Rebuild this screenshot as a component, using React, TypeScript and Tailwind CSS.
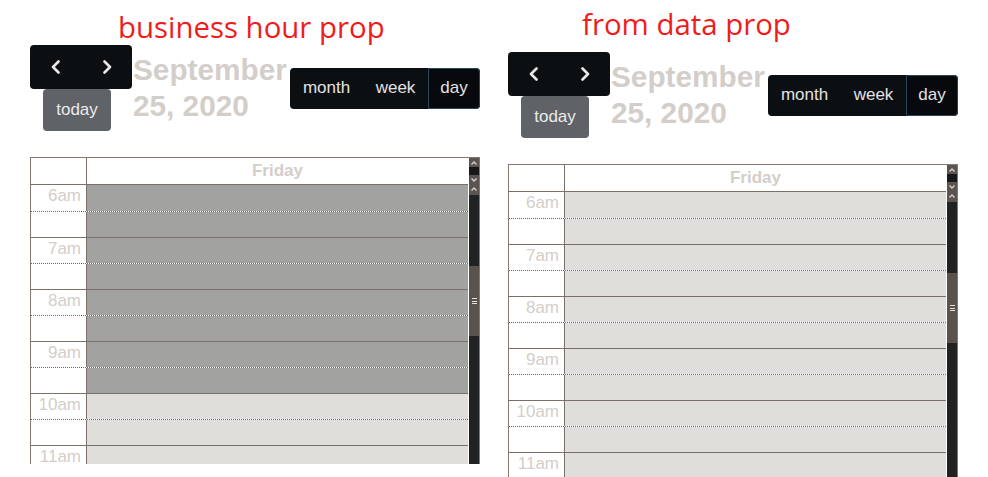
import React from 'react';

const hours = ['6am', '7am', '8am', '9am', '10am', '11am', '12pm', '1pm'];

const Chevron: React.FC<{ dir: 'left' | 'right' }> = ({ dir }) => (
  <svg width="12" height="14" viewBox="0 0 12 14" fill="none">
    <path
      d={dir === 'left' ? 'M8.5 1.5 L3 7 L8.5 12.5' : 'M3.5 1.5 L9 7 L3.5 12.5'}
      stroke="#e8e8e8"
      strokeWidth="2.6"
      strokeLinecap="round"
      strokeLinejoin="round"
    />
  </svg>
);

const Tiny: React.FC<{ up?: boolean }> = ({ up }) => (
  <svg width="6" height="4" viewBox="0 0 6 4" fill="none">
    <path d={up ? 'M0.5 3.5 L3 1 L5.5 3.5' : 'M0.5 0.5 L3 3 L5.5 0.5'} stroke="#d6d3d0" strokeWidth="1.3" />
  </svg>
);

const Scrollbar: React.FC = () => (
  <div className="w-[11px] flex flex-col border-l border-white bg-[#202224]">
    <div className="h-[9px] bg-[#5b5450] flex items-center justify-center">
      <Tiny up />
    </div>
    <div className="h-[8px] bg-[#17181a]" />
    <div className="h-[9px] bg-[#5b5450] flex items-center justify-center">
      <Tiny />
    </div>
    <div className="h-[11px] bg-[#5b5450] flex items-start justify-center pt-[3px]">
      <Tiny up />
    </div>
    <div className="h-[71px]" />
    <div className="h-[70px] bg-[#5a524d] flex flex-col items-center justify-center gap-[1.5px]">
      <div className="w-[5px] h-[1px] bg-[#e2dfdc]" />
      <div className="w-[5px] h-[1px] bg-[#e2dfdc]" />
      <div className="w-[5px] h-[1px] bg-[#e2dfdc]" />
    </div>
    <div className="flex-1" />
  </div>
);

const Calendar: React.FC<{ business: boolean; height: string }> = ({ business, height }) => (
  <div>
    <div className="flex items-center justify-between h-[86px]">
      <div className="flex flex-col w-[102px]">
        <div className="flex h-[44px] rounded-[4px] bg-[#0c0f12]">
          <div className="w-[51px] flex items-center justify-center">
            <Chevron dir="left" />
          </div>
          <div className="w-[51px] flex items-center justify-center">
            <Chevron dir="right" />
          </div>
        </div>
        <div className="ml-[13px] w-[68px] h-[42px] rounded-[4px] bg-[#5f6266] flex items-center justify-center text-[17px] text-[#ebebeb]">
          today
        </div>
      </div>
      <div className="flex-1 pl-[1px] text-[29.75px] leading-[36px] font-bold text-[#d3cec9]">
        September
        <br />
        25, 2020
      </div>
      <div className="flex h-[41px] rounded-[4px] bg-[#0c0f12] text-[17px] text-[#e2e2e2]">
        <div className="w-[73px] flex items-center justify-center">month</div>
        <div className="w-[65px] flex items-center justify-center">week</div>
        <div className="w-[52px] flex items-center justify-center bg-[#07090c] border border-[#2e4459] rounded-r-[4px]">
          day
        </div>
      </div>
    </div>
    <div className={`mt-[26px] ${height} overflow-hidden border-t border-l border-r border-[#857772] flex`}>
      <div className="flex-1 flex flex-col">
        <div className="flex h-[27px] border-b border-[#7b6f6a] shrink-0">
          <div className="w-[56px] border-r border-[#7b6f6a]" />
          <div className="flex-1 flex items-center justify-center text-[17px] font-bold text-[#d3cec9]">
            Friday
          </div>
        </div>
        {hours.map((h, i) => {
          const shaded = business && i < 4;
          const bg = shaded ? 'bg-[#a2a2a0]' : 'bg-[#dfdedb]';
          return (
            <React.Fragment key={h}>
              <div className={`flex h-[26px] shrink-0 ${i > 0 ? 'border-t border-[#7b6f6a]' : ''}`}>
                <div className="w-[56px] border-r border-[#7b6f6a] text-right pr-[5px] text-[17px] leading-[22px] text-[#d3cec9] bg-white">
                  {h}
                </div>
                <div className={`flex-1 ${bg}`} />
              </div>
              <div className="flex h-[26px] shrink-0 border-t border-dotted border-[#6f6560]">
                <div className="w-[56px] border-r border-[#7b6f6a] bg-white" />
                <div className={`flex-1 ${bg}`} />
              </div>
            </React.Fragment>
          );
        })}
      </div>
      <Scrollbar />
    </div>
  </div>
);

export default function App() {
  return (
    <div
      className="w-[988px] h-[477px] overflow-hidden bg-white flex"
      style={{ fontFamily: '"Liberation Sans", Arial, sans-serif' }}
    >
      <div className="ml-[30px] w-[450px]">
        <div
          className="h-[45px] pt-[11px] pl-[88px] leading-[32px] text-[29.4px] text-[#f01c1c] whitespace-nowrap"
          style={{ fontFamily: '"Open Sans", "Noto Sans", sans-serif' }}
        >
          business hour prop
        </div>
        <Calendar business height="h-[307px]" />
      </div>
      <div className="ml-[28px] w-[450px]">
        <div
          className="h-[52px] pt-[8px] pl-[74px] leading-[32px] text-[29.4px] text-[#f01c1c] whitespace-nowrap"
          style={{ fontFamily: '"Open Sans", "Noto Sans", sans-serif' }}
        >
          from data prop
        </div>
        <Calendar business={false} height="h-[320px]" />
      </div>
    </div>
  );
}
